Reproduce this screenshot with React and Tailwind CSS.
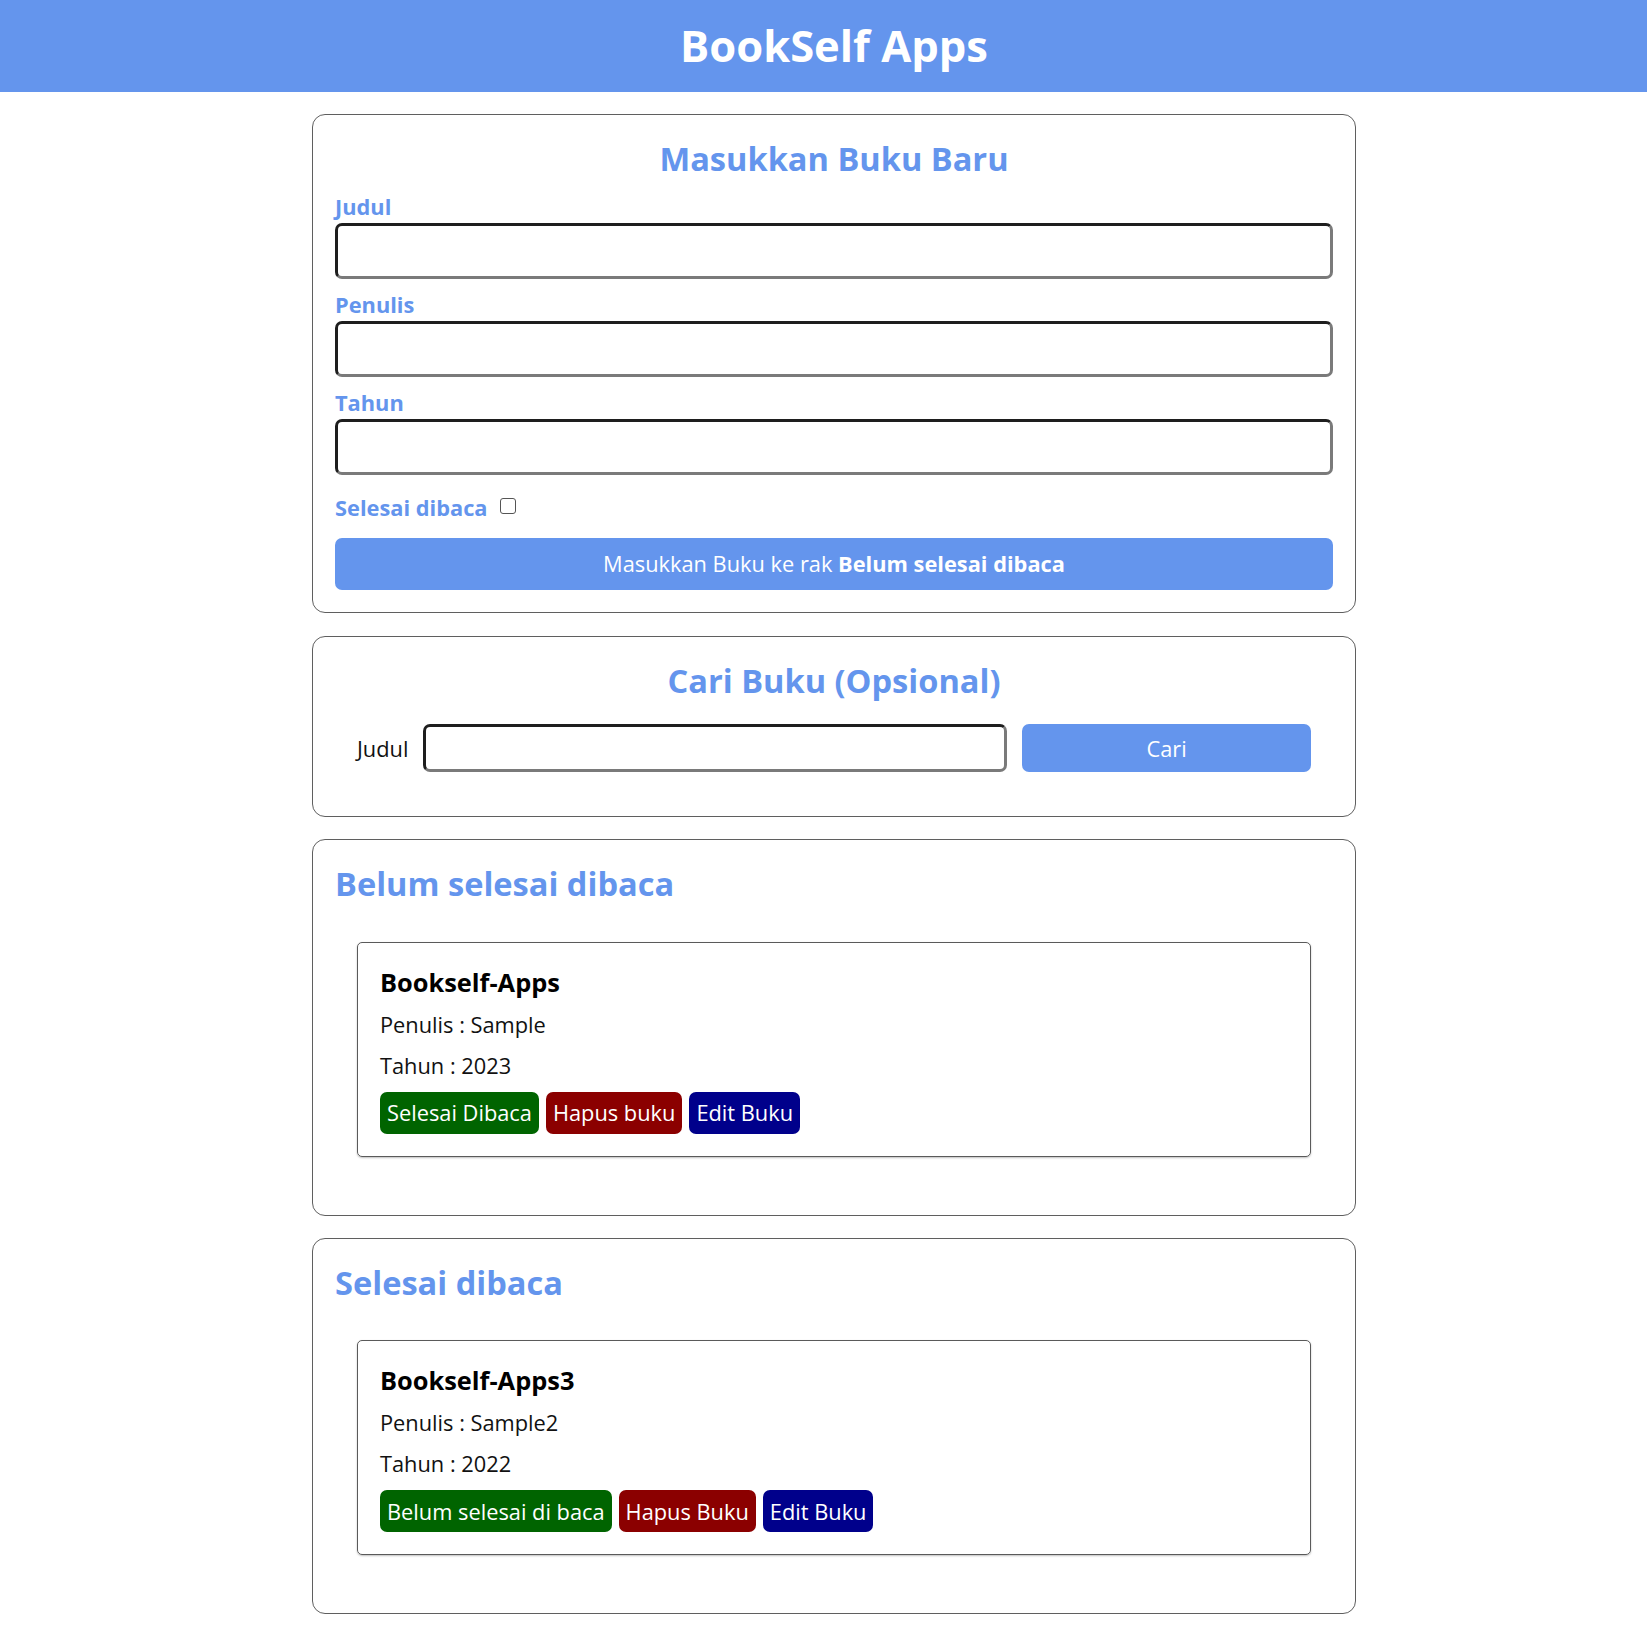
import React from "react";

const inputCls =
  "block w-full h-[56px] rounded-[7px] border-[3px] border-solid border-[#7a7a7a] border-t-[#1e1e1e] border-l-[#1e1e1e] bg-white";

function Field({ label }) {
  return (
    <div className="mt-[11px]">
      <label className="mb-[2px] block text-[21.8px] leading-[29px] font-bold text-[#6495ed]">{label}</label>
      <input type="text" className={inputCls} />
    </div>
  );
}

function BookItem({ title, author, year, actions }) {
  return (
    <article className="mx-[22px] my-[36px] rounded-[5px] border border-[#5a5a5a] px-[22px] pt-[22px] pb-[22px] shadow-[0_1px_2px_rgba(0,0,0,0.25)]">
      <h3 className="text-[25.4px] leading-[34px] font-bold text-black">{title}</h3>
      <p className="mt-[11px] text-[21.8px] leading-[29px] text-[#111]">Penulis : {author}</p>
      <p className="mt-[12px] text-[21.8px] leading-[29px] text-[#111]">Tahun : {year}</p>
      <div className="mt-[12px] flex gap-[7px]">
        {actions.map((a) => (
          <button
            key={a.label}
            className={`h-[42px] rounded-[7px] px-[7px] text-[21.8px] leading-[29px] text-white ${a.cls}`}
          >
            {a.label}
          </button>
        ))}
      </div>
    </article>
  );
}

export default function App() {
  return (
    <div className="min-h-[1634px] bg-white font-['Open_Sans',sans-serif] pb-[22px]">
      <header className="flex h-[92px] items-center justify-center bg-[#6495ed] pl-[21px]">
        <h1 className="text-[43.5px] leading-[58px] font-bold text-white">BookSelf Apps</h1>
      </header>

      <div className="pl-[21px]">
        <main className="mx-auto w-[1044px]">
          {/* Input section */}
          <section className="mt-[22px] rounded-[13px] border border-[#5f5f5f] p-[22px]">
            <h2 className="text-center text-[32.6px] leading-[43.6px] font-bold text-[#6495ed]">Masukkan Buku Baru</h2>
            <form>
              <Field label="Judul" />
              <Field label="Penulis" />
              <Field label="Tahun" />
              <div className="mt-[18px] flex items-center">
                <label className="text-[21.8px] leading-[29px] font-bold text-[#6495ed]">Selesai dibaca</label>
                <span className="ml-[12px] mt-[-3px] inline-block h-[16px] w-[16px] rounded-[3px] border-[1.5px] border-[#555] bg-white"></span>
              </div>
              <button
                type="button"
                className="mt-[16px] block h-[52px] w-full rounded-[7px] bg-[#6495ed] text-[21.8px] leading-[30px] text-white"
              >
                Masukkan Buku ke rak <span className="font-bold">Belum selesai dibaca</span>
              </button>
            </form>
          </section>

          {/* Search */}
          <section className="mt-[23px] rounded-[13px] border border-[#5f5f5f] p-[22px]">
            <h2 className="text-center text-[32.6px] leading-[43.6px] font-bold text-[#6495ed]">Cari Buku (Opsional)</h2>
            <form className="flex items-center gap-[15px] p-[22px]">
              <label className="text-[21.8px] leading-[29px] text-[#111]">Judul</label>
              <input
                type="text"
                className="h-[48px] w-0 flex-[2] rounded-[7px] border-[3px] border-solid border-[#7a7a7a] border-t-[#1e1e1e] border-l-[#1e1e1e] bg-white"
              />
              <button
                type="button"
                className="h-[48px] w-0 flex-1 rounded-[7px] bg-[#6495ed] text-[21.8px] leading-[29px] text-white"
              >
                Cari
              </button>
            </form>
          </section>

          {/* Incomplete shelf */}
          <section className="mt-[22px] rounded-[13px] border border-[#5f5f5f] px-[22px] pt-[22px] pb-[22px]">
            <h2 className="text-[32.6px] leading-[43.6px] font-bold text-[#6495ed]">Belum selesai dibaca</h2>
            <BookItem
              title="Bookself-Apps"
              author="Sample"
              year="2023"
              actions={[
                { label: "Selesai Dibaca", cls: "bg-[#006400]" },
                { label: "Hapus buku", cls: "bg-[#8b0000]" },
                { label: "Edit Buku", cls: "bg-[#00008b]" },
              ]}
            />
          </section>

          {/* Complete shelf */}
          <section className="mt-[22px] rounded-[13px] border border-[#5f5f5f] px-[22px] pt-[22px] pb-[22px]">
            <h2 className="text-[32.6px] leading-[43.6px] font-bold text-[#6495ed]">Selesai dibaca</h2>
            <BookItem
              title="Bookself-Apps3"
              author="Sample2"
              year="2022"
              actions={[
                { label: "Belum selesai di baca", cls: "bg-[#006400]" },
                { label: "Hapus Buku", cls: "bg-[#8b0000]" },
                { label: "Edit Buku", cls: "bg-[#00008b]" },
              ]}
            />
          </section>
        </main>
      </div>
    </div>
  );
}
